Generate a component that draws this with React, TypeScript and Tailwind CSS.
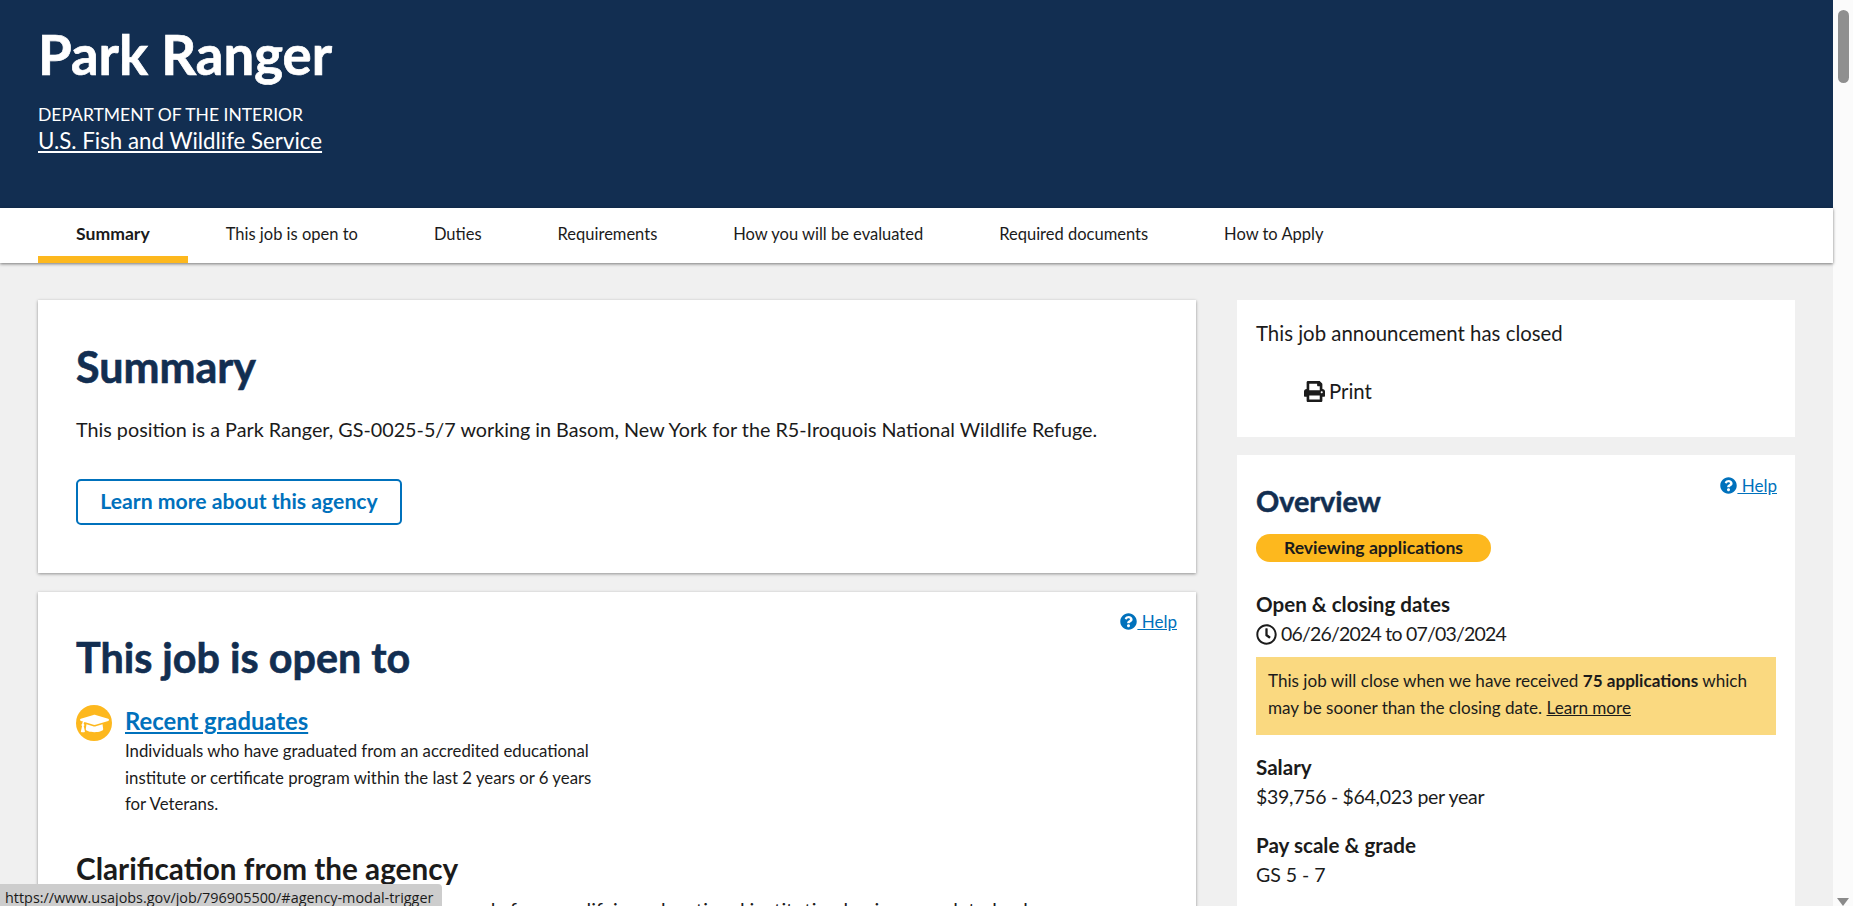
import React from "react";
import { FaGraduationCap, FaPrint, FaQuestionCircle, FaRegClock } from "react-icons/fa";

const tabs = [
  "Summary",
  "This job is open to",
  "Duties",
  "Requirements",
  "How you will be evaluated",
  "Required documents",
  "How to Apply",
];

const HelpLink = ({ className }: { className?: string }) => (
  <a className={`flex items-center text-[17px] leading-none text-[#0071bc] ${className ?? ""}`}>
    <FaQuestionCircle className="w-[17px] h-[17px]" />
    <span className="underline whitespace-pre"> Help</span>
  </a>
);

const App: React.FC = () => {
  return (
    <div className="flex h-screen w-full overflow-hidden font-['Lato',sans-serif] text-[#1b1b1b] relative">
      <div className="flex-1 min-w-0 bg-[#f0f0f0]">
        {/* Title banner */}
        <div className="bg-[#122e51] h-[208px] pl-[38px] pt-[16px] text-white">
          <h1 className="text-[54.5px] leading-[76px] font-bold [-webkit-text-stroke:0.7px]">Park Ranger</h1>
          <p className="mt-[11px] text-[17.5px] leading-[24px]">DEPARTMENT OF THE INTERIOR</p>
          <a className="block -mt-[1px] text-[22.3px] leading-[30px] underline">U.S. Fish and Wildlife Service</a>
        </div>

        {/* Tabs */}
        <div className="bg-white h-[55px] pl-[38px] flex shadow-[0_1px_3px_rgba(0,0,0,0.5)] relative">
          {tabs.map((tab, i) => (
            <div
              key={tab}
              className={`px-[38px] pt-[14px] leading-[24px] ${
                i === 0 ? "text-[17.6px] font-bold border-b-[7px] border-[#fdb81e]" : "text-[16.5px]"
              }`}
            >
              {tab}
            </div>
          ))}
        </div>

        <div className="flex pl-[38px] pt-[37px] gap-[41px]">
          {/* Left column */}
          <div className="w-[1158px] shrink-0">
            <div className="bg-white h-[273px] pt-[39px] pl-[38px] shadow-[0_1px_3px_rgba(0,0,0,0.4)]">
              <h2 className="text-[43px] leading-[56px] font-bold text-[#122e51] [-webkit-text-stroke:0.6px]">Summary</h2>
              <p className="mt-[19px] text-[19.75px] leading-[32px]">
                This position is a Park Ranger, GS-0025-5/7 working in Basom, New York for the R5-Iroquois National Wildlife Refuge.
              </p>
              <div className="mt-[33px] w-[326px] h-[46px] border-[2px] border-[#0071bc] rounded-[5px] flex items-center justify-center text-[21.2px] font-bold text-[#0071bc]">
                Learn more about this agency
              </div>
            </div>
            <div className="bg-white mt-[19px] h-[500px] pt-[37px] pl-[38px] shadow-[0_1px_3px_rgba(0,0,0,0.4)] relative">
              <HelpLink className="absolute right-[19px] top-[21px]" />
              <h2 className="text-[41.3px] leading-[56px] font-bold text-[#122e51] [-webkit-text-stroke:0.6px]">This job is open to</h2>
              <div className="flex mt-[20px]">
                <div className="w-[36px] h-[36px] rounded-full bg-[#fdb81e] flex items-center justify-center shrink-0">
                  <FaGraduationCap className="w-[29px] h-[29px] text-white" />
                </div>
                <div className="ml-[13px]">
                  <a className="block mt-[1px] text-[23.8px] leading-[30px] font-bold underline text-[#0071bc]">Recent graduates</a>
                  <p className="mt-[2px] w-[480px] text-[16.8px] leading-[26.6px]">
                    Individuals who have graduated from an accredited educational institute or certificate program within the last 2 years or 6 years for Veterans.
                  </p>
                </div>
              </div>
              <h3 className="mt-[30px] text-[29.7px] leading-[42px] font-bold">Clarification from the agency</h3>
              <p className="mt-[4px] text-[19.75px] leading-[32px] whitespace-nowrap">
                Recent graduates of accredited schools may apply for a qualifying educational institution having completed a degree
              </p>
            </div>
          </div>

          {/* Right column */}
          <div className="w-[558px] shrink-0">
            <div className="bg-white h-[137px] pt-[19px] pl-[19px] text-[20.4px]">
              <p className="leading-[28px]">This job announcement has closed</p>
              <div className="flex items-center mt-[29px] ml-[48px]">
                <FaPrint className="w-[21px] h-[21px] mr-[4px]" />
                Print
              </div>
            </div>
            <div className="bg-white mt-[18px] h-[500px] px-[19px] relative">
              <HelpLink className="absolute right-[18px] top-[22px]" />
              <h2 className="pt-[26px] text-[28.8px] leading-[40px] font-bold text-[#122e51] [-webkit-text-stroke:0.5px]">Overview</h2>
              <div className="mt-[13px] w-[235px] h-[28px] rounded-full bg-[#fdb81e] flex items-center justify-center text-[17.6px] font-bold">
                Reviewing applications
              </div>
              <p className="mt-[28px] text-[20.6px] leading-[28px] font-bold">Open &amp; closing dates</p>
              <div className="mt-[2px] flex items-center text-[19.5px] leading-[28px] tracking-[-0.8px]">
                <FaRegClock className="w-[21px] h-[21px] mr-[4px]" />
                06/26/2024 to 07/03/2024
              </div>
              <div className="mt-[9px] bg-[#fad980] px-[12px] pt-[10px] h-[78px] text-[17.1px] leading-[27px]">
                This job will close when we have received <b>75 applications</b> which may be sooner than the closing date. <span className="underline">Learn more</span>
              </div>
              <p className="mt-[18px] text-[20.6px] leading-[28px] font-bold">Salary</p>
              <p className="mt-[2px] text-[19.5px] leading-[28px] tracking-[-0.3px]">$39,756 - $64,023 per year</p>
              <p className="mt-[20px] text-[20.6px] leading-[28px] font-bold">Pay scale &amp; grade</p>
              <p className="mt-[2px] text-[19.5px] leading-[28px]">GS 5 - 7</p>
            </div>
          </div>
        </div>
      </div>

      {/* Page scrollbar */}
      <div className="w-[20px] shrink-0 bg-[#fbfbfb] flex flex-col items-center pt-[10px]">
        <div className="w-[11px] h-[73px] rounded-full bg-[#8f8f8f]" />
        <svg viewBox="0 0 12 8" className="mt-auto w-[12px] h-[8px]" fill="#8a8a8a">
          <path d="M0 0h12L6 8z" />
        </svg>
      </div>

      {/* Link preview in the browser's status bubble */}
      <div className="absolute left-0 bottom-0 h-[22px] w-[442px] bg-[#cdcdcd] rounded-tr-[4px] pl-[5px] text-[14.4px] leading-[28px] text-[#1a1a1a] font-['Open_Sans',sans-serif] whitespace-nowrap overflow-hidden">
        https://www.usajobs.gov/job/796905500/#agency-modal-trigger
      </div>
    </div>
  );
};

export default App;
